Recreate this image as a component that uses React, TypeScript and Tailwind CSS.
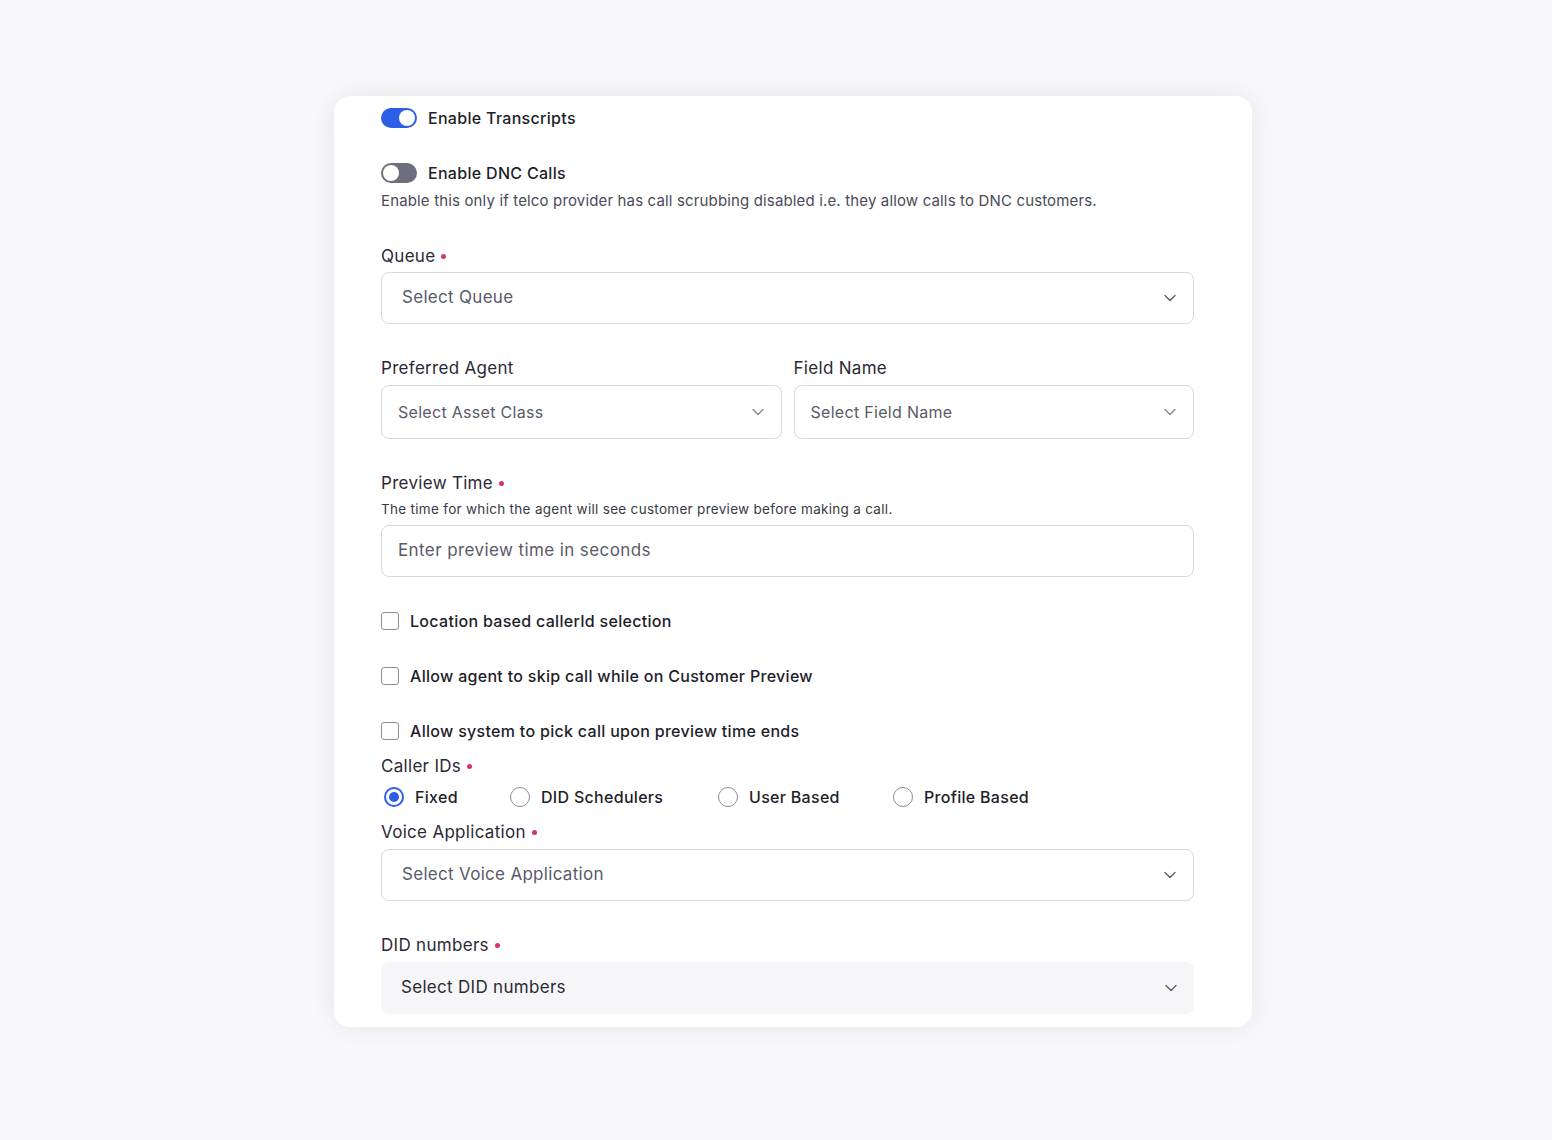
import React from 'react';

const FONT = { fontFamily: 'Inter, "Noto Sans", sans-serif' };

function Chevron({ light = false }: { light?: boolean }) {
  return (
    <svg width="14" height="14" viewBox="0 0 14 14" fill="none" className={light ? 'text-[#8a8a98]' : 'text-[#5c5c6e]'}>
      <path d="M2 4.5l5 5 5-5" stroke="currentColor" strokeWidth="1.4" strokeLinecap="round" strokeLinejoin="round" />
    </svg>
  );
}

function Label({ text, required = false, className = '' }: { text: string; required?: boolean; className?: string }) {
  return (
    <div className={`flex items-center text-[17px] text-[#2a2a36] leading-6 ${className}`}>
      {text}
      {required && <span className="ml-[6px] w-[5px] h-[5px] rounded-full bg-[#d9336b]" />}
    </div>
  );
}

function Select({ placeholder, small = false, filled = false }: { placeholder: string; small?: boolean; filled?: boolean }) {
  return (
    <div
      className={`flex items-center justify-between rounded-lg ${
        filled ? 'bg-[#f6f6f8] h-[52px] pl-5 pr-4' : small ? 'border border-[#d8d8de] h-[54px] pl-4 pr-4 bg-white' : 'border border-[#d8d8de] h-[52px] pl-5 pr-4 bg-white'
      }`}
    >
      <span className={`${small ? 'text-[16px]' : 'text-[17px]'} ${filled ? 'text-[#2a2a36]' : 'text-[#5a5a6a]'}`}>{placeholder}</span>
      <Chevron light={small} />
    </div>
  );
}

function Toggle({ on }: { on: boolean }) {
  return (
    <div className={`w-9 h-5 rounded-full flex items-center px-[2px] ${on ? 'bg-[#2c5ee8] justify-end' : 'bg-[#6e6e7e] justify-start'}`}>
      <div className="w-4 h-4 rounded-full bg-white" />
    </div>
  );
}

function Checkbox({ label }: { label: string }) {
  return (
    <div className="flex items-center gap-[11px]">
      <div className="w-[18px] h-[18px] rounded-[3px] border border-[#8c8c9a] bg-white" />
      <span className="text-[16px] font-medium text-[#1e1e2a]">{label}</span>
    </div>
  );
}

function Radio({ label, checked = false }: { label: string; checked?: boolean }) {
  return (
    <div className="flex items-center gap-[11px]">
      <div className={`w-5 h-5 rounded-full border flex items-center justify-center ${checked ? 'border-[#2c5ee8] border-2' : 'border-[#8c8c9a]'}`}>
        {checked && <div className="w-[10px] h-[10px] rounded-full bg-[#2c5ee8]" />}
      </div>
      <span className="text-[16px] font-medium text-[#1e1e2a]">{label}</span>
    </div>
  );
}

export default function App() {
  return (
    <div className="min-h-screen w-full bg-[#f8f8fa] pt-24 pb-[113px] tracking-[0.3px]" style={FONT}>
      <div className="ml-[334px] w-[918px] bg-white rounded-2xl shadow-[0_0_24px_rgba(0,0,0,0.08)] pl-[47px] pr-[58px] pt-3 pb-[13px]">
        <div className="flex items-center gap-[11px] h-5">
          <Toggle on />
          <span className="text-[16px] font-medium text-[#1e1e2a]">Enable Transcripts</span>
        </div>

        <div className="flex items-center gap-[11px] h-5 mt-[35px]">
          <Toggle on={false} />
          <span className="text-[16px] font-medium text-[#1e1e2a]">Enable DNC Calls</span>
        </div>
        <p className="text-[15px] tracking-[0.15px] text-[#4a4a58] mt-[8px] leading-5">
          Enable this only if telco provider has call scrubbing disabled i.e. they allow calls to DNC customers.
        </p>

        <Label text="Queue" required className="mt-[33px]" />
        <div className="mt-[4px]">
          <Select placeholder="Select Queue" />
        </div>

        <div className="grid grid-cols-2 gap-3 mt-[32px]">
          <div>
            <Label text="Preferred Agent" />
            <div className="mt-[5px]">
              <Select placeholder="Select Asset Class" small />
            </div>
          </div>
          <div>
            <Label text="Field Name" />
            <div className="mt-[5px]">
              <Select placeholder="Select Field Name" small />
            </div>
          </div>
        </div>

        <Label text="Preview Time" required className="mt-[32px]" />
        <p className="text-[13.5px] text-[#3a3a46] mt-[4px] leading-5">
          The time for which the agent will see customer preview before making a call.
        </p>
        <div className="mt-[6px] h-[52px] border border-[#d8d8de] rounded-lg flex items-center pl-4">
          <span className="text-[17px] tracking-[0.4px] text-[#5a5a6a]">Enter preview time in seconds</span>
        </div>

        <div className="mt-[32px] flex flex-col gap-[31px]">
          <Checkbox label="Location based callerId selection" />
          <Checkbox label="Allow agent to skip call while on Customer Preview" />
          <Checkbox label="Allow system to pick call upon preview time ends" />
        </div>

        <Label text="Caller IDs" required className="mt-[11px]" />
        <div className="flex items-center mt-[7px] pl-[3px]">
          <div className="w-[126px]"><Radio label="Fixed" checked /></div>
          <div className="w-[208px]"><Radio label="DID Schedulers" /></div>
          <div className="w-[175px]"><Radio label="User Based" /></div>
          <Radio label="Profile Based" />
        </div>

        <Label text="Voice Application" required className="mt-[11px]" />
        <div className="mt-[5px]">
          <Select placeholder="Select Voice Application" />
        </div>

        <Label text="DID numbers" required className="mt-[32px]" />
        <div className="mt-[5px]">
          <Select placeholder="Select DID numbers" filled />
        </div>
      </div>
    </div>
  );
}
